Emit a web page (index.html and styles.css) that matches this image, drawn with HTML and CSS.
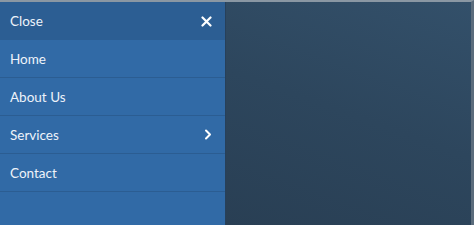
FILE: index.html
```html
<!DOCTYPE html>
<html lang="en">
<head>
    <meta charset="UTF-8">
    <meta name="viewport" content="width=device-width, initial-scale=1.0">
    <title>Side Menu</title>
    <link rel="stylesheet" href="styles.css">
</head>
<body>
    <div class="page">
        <!-- Side navigation -->
        <nav class="side-nav">
            <div class="nav-head">
                <span>Close</span>
                <svg class="icon-close" width="11" height="11" viewBox="0 0 11 11">
                    <path d="M1.5 1.5 L9.5 9.5 M9.5 1.5 L1.5 9.5" stroke="#fff" stroke-width="2.2" stroke-linecap="round"/>
                </svg>
            </div>
            <a class="nav-item" href="#">Home</a>
            <a class="nav-item" href="#">About Us</a>
            <a class="nav-item" href="#">Services
                <svg class="icon-chevron" width="8" height="11" viewBox="0 0 8 11">
                    <path d="M2 1.5 L6 5.5 L2 9.5" fill="none" stroke="#fff" stroke-width="2" stroke-linecap="round" stroke-linejoin="round"/>
                </svg>
            </a>
            <a class="nav-item" href="#">Contact</a>
        </nav>

        <!-- Main content area -->
        <main class="content"></main>
    </div>
</body>
</html>
```

FILE: styles.css
```css
body {
    margin: 0;
    padding: 0;
    font-family: Lato, "Open Sans", sans-serif;
    background-color: #2c4359;
}
.page {
    display: flex;
    height: 225px;
    box-sizing: border-box;
    border-top: 2px solid #8a97a3;
    border-right: 3px solid #5b6c7c;
}
.side-nav {
    width: 225px;
    flex-shrink: 0;
    background-color: #316aa6;
    border-right: 1px solid #27405a;
    display: flex;
    flex-direction: column;
}
.nav-head {
    height: 38px;
    display: flex;
    align-items: center;
    justify-content: space-between;
    padding: 0 13px 0 10px;
    background-color: #2c5e93;
    color: #eef3fa;
    font-size: 13.5px;
}
.nav-item {
    height: 37px;
    display: flex;
    align-items: center;
    justify-content: space-between;
    padding: 0 13px 0 10px;
    color: #eef3fa;
    font-size: 13.5px;
    text-decoration: none;
    border-bottom: 1px solid #2b5d92;
}
.icon-close {
    display: block;
}
.icon-chevron {
    display: block;
}
.content {
    flex: 1;
    background: linear-gradient(200deg, #33506a 0%, #2d465d 50%, #293f54 100%);
}
```
